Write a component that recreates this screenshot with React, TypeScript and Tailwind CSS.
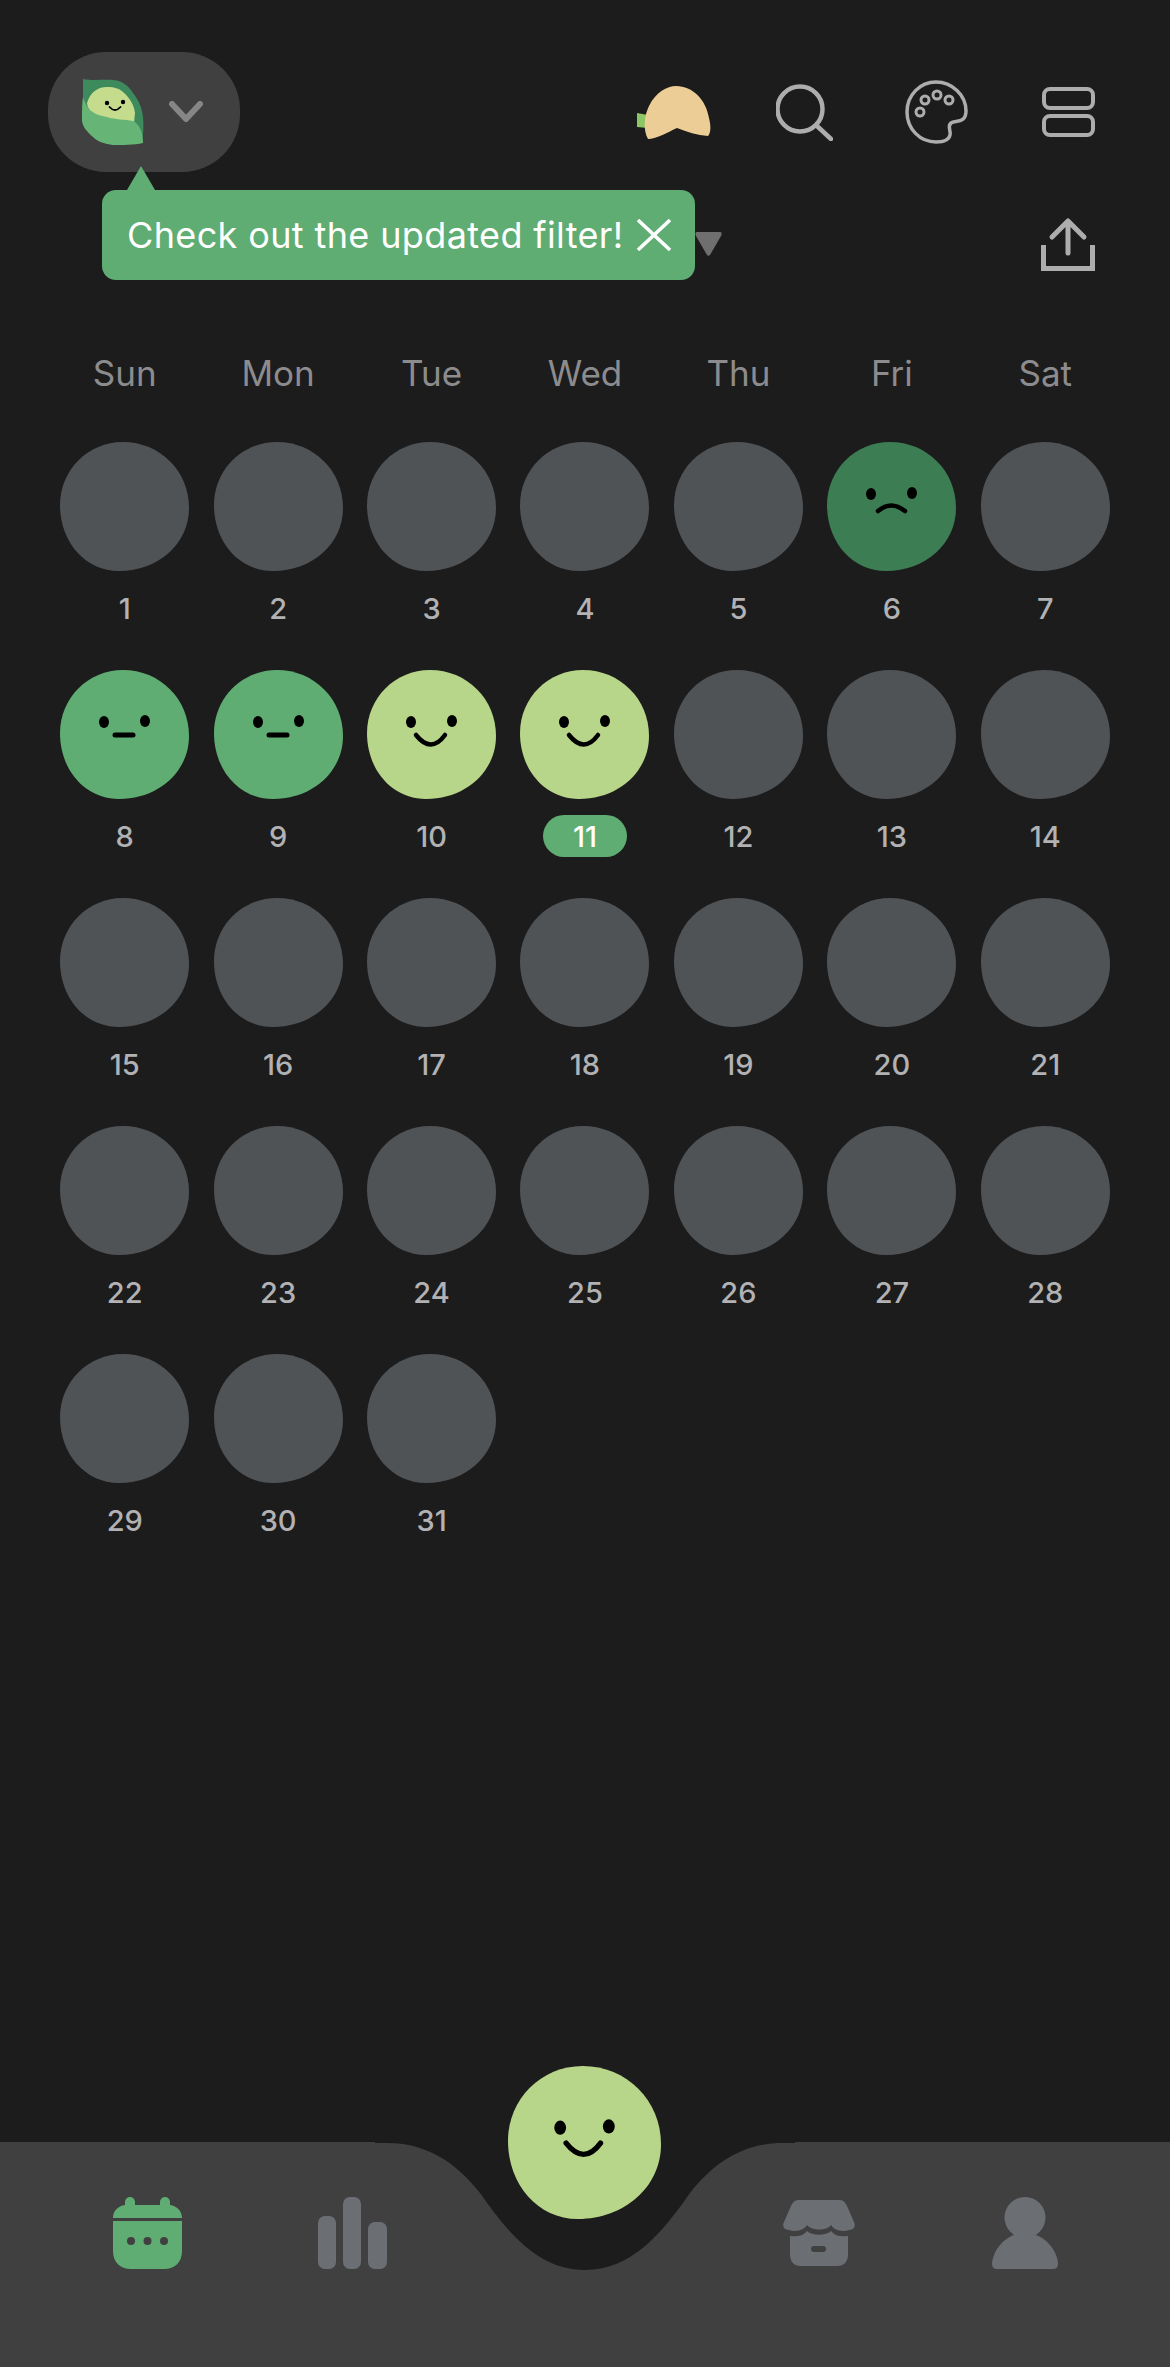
const weekdays = ["Sun", "Mon", "Tue", "Wed", "Thu", "Fri", "Sat"]

type Mood = "none" | "sad" | "neutral" | "happy"

const moods: Record<number, Mood> = { 6: "sad", 8: "neutral", 9: "neutral", 10: "happy", 11: "happy" }

const blobColors = {
  none: "fill-[#505356]",
  sad: "fill-[#3d7d54]",
  neutral: "fill-[#5fad73]",
  happy: "fill-[#b8d68a]",
}

function MoodBlob({ mood, className }: { mood: Mood; className: string }) {
  return (
    <svg viewBox="0 0 129 129" className={className}>
      <path
        className={blobColors[mood]}
        d="M63 0C100 0 129 29 129 66C129 102 98 129 59 129C25 129 0 100 0 63C0 28 28 0 63 0Z"
      />
      {mood !== "none" && (
        <g>
          <ellipse cx="44" cy="52" rx="5" ry="6" fill="#000" />
          <ellipse cx="85" cy="51" rx="5" ry="6" fill="#000" />
        </g>
      )}
      {mood === "sad" && (
        <path d="M51 69Q64 58 78 69" fill="none" stroke="#000" strokeWidth="4.5" strokeLinecap="round" />
      )}
      {mood === "neutral" && (
        <path d="M55 65H73" fill="none" stroke="#000" strokeWidth="5" strokeLinecap="round" />
      )}
      {mood === "happy" && (
        <path d="M49 65Q64 84 78 65" fill="none" stroke="#000" strokeWidth="4.5" strokeLinecap="round" />
      )}
    </svg>
  )
}

function DayCell({ day }: { day: number }) {
  const isToday = day === 11
  return (
    <div className="flex flex-col items-center">
      <MoodBlob mood={moods[day] ?? "none"} className="h-[129px] w-[129px]" />
      <div
        className={`mt-4 flex h-[42px] w-[84px] items-center justify-center rounded-full pt-[2px] text-[29px] font-medium ${
          isToday ? "bg-[#5fad73] text-white" : "text-[#b2b2b4]"
        }`}
      >
        {day}
      </div>
    </div>
  )
}

function PeaLogo() {
  return (
    <svg viewBox="0 0 62 66" className="h-[66px] w-[62px]">
      <path d="M1 0C12 2 22 0 31 1C42 2 47 8 51 14C58 23 60 30 61 38C62 47 61 56 60 64L30 50L1 30Z" fill="#3d8a5c" />
      <path d="M5 24C8 14 15 8 25 8C33 8 38 10 41 13C48 19 52 26 53 34L52 44L20 42C12 38 6 32 5 24Z" fill="#c5dc8c" />
      <path
        d="M1 18C3 25 6 28 8 31C13 35 18 37 25 38C33 41 43 40 51 42C57 45 61 52 61 64C52 66 40 66 31 66C23 65 16 63 11 58C4 52 -1 46 0 38C0 31 0 24 1 18Z"
        fill="#66b577"
      />
      <circle cx="25" cy="24" r="2.2" fill="#000" />
      <circle cx="41" cy="23" r="2.2" fill="#000" />
      <path d="M27.5 28Q33 34 38.5 28" fill="none" stroke="#000" strokeWidth="1.8" strokeLinecap="round" />
    </svg>
  )
}

function FortuneCookie() {
  return (
    <svg viewBox="0 0 74 53" className="h-[53px] w-[74px]">
      <path d="M0 27L11 29V42L0 41Z" fill="#8cc665" />
      <path
        d="M11 53C6 44 7 30 12 20C19 6 30 0 39 0C56 0 69 14 72 32C74 40 74 47 71 50C60 49 50 46 40 42C31 46 20 53 11 53Z"
        fill="#eccd95"
      />
    </svg>
  )
}

function SearchIcon() {
  return (
    <svg viewBox="0 0 57 57" className="h-[57px] w-[57px]" fill="none" stroke="#adadad" strokeWidth="4.5" strokeLinecap="round">
      <circle cx="24" cy="25" r="22.5" />
      <path d="M41 42L55 55" />
    </svg>
  )
}

function PaletteIcon() {
  return (
    <svg viewBox="0 0 63 64" className="h-16 w-[63px]" fill="none" stroke="#adadad" strokeWidth="3.5">
      <path d="M31 2C15 2 2 15 2 32C2 49 15 62 31 62C38 62 44 60 45 55C46 50 42 46 46 43C50 40 61 44 61 31C61 15 47 2 31 2Z" />
      <circle cx="20" cy="20" r="4" strokeWidth="3" />
      <circle cx="32" cy="15" r="4" strokeWidth="3" />
      <circle cx="44" cy="20" r="4" strokeWidth="3" />
      <circle cx="15" cy="32" r="4" strokeWidth="3" />
    </svg>
  )
}

function LayoutIcon() {
  return (
    <svg viewBox="0 0 53 50" className="h-[50px] w-[53px]" fill="none" stroke="#adadad" strokeWidth="4">
      <rect x="2" y="2" width="49" height="19" rx="6" />
      <rect x="2" y="29" width="49" height="19" rx="6" />
    </svg>
  )
}

function ShareIcon() {
  return (
    <svg viewBox="0 0 54 54" className="h-[54px] w-[54px]" fill="none" stroke="#adadad" strokeWidth="5">
      <path d="M2.5 28V51.5H51.5V28" strokeLinecap="butt" />
      <path d="M27 36V4M11 20L27 4L43 20" strokeLinecap="round" strokeLinejoin="round" />
    </svg>
  )
}

function CalendarIcon() {
  return (
    <svg viewBox="0 0 69 72" className="h-[72px] w-[69px]">
      <path
        d="M12 8V5A5 5 0 0 1 22 5V8H47V5A5 5 0 0 1 57 5V8C64 9 69 14 69 21H0C0 14 5 9 12 8Z"
        fill="#5fad73"
      />
      <path d="M0 24H69V54C69 65 62 72 51 72H18C7 72 0 65 0 54Z" fill="#5fad73" />
      <circle cx="18" cy="44" r="4" fill="#404040" />
      <circle cx="34.5" cy="44" r="4" fill="#404040" />
      <circle cx="51" cy="44" r="4" fill="#404040" />
    </svg>
  )
}

function BarsIcon() {
  return (
    <svg viewBox="0 0 69 72" className="h-[72px] w-[69px]" fill="#6b6f74">
      <rect x="0" y="19" width="18" height="53" rx="7" />
      <rect x="25" y="0" width="18" height="72" rx="7" />
      <rect x="50" y="25" width="19" height="47" rx="7" />
    </svg>
  )
}

function StoreIcon() {
  return (
    <svg viewBox="0 0 72 66" className="h-[66px] w-[72px]">
      <path
        d="M16 0H56C60 0 62 2 64 6L71 22C73 26 71 30 66 30C60 32 52 31 48 25C44 31 29 31 24 25C20 31 12 32 6 30C1 30 -1 26 1 22L8 6C10 2 12 0 16 0Z"
        fill="#6b6f74"
      />
      <path
        d="M7 36C14 37 20 36 24 31C29 36 43 36 48 31C52 36 58 37 65 36V54C65 62 61 66 54 66H18C11 66 7 62 7 54Z"
        fill="#6b6f74"
      />
      <rect x="28" y="46" width="15" height="6" rx="3" fill="#404040" />
    </svg>
  )
}

function PersonIcon() {
  return (
    <svg viewBox="0 0 66 72" className="h-[72px] w-[66px]" fill="#6b6f74">
      <circle cx="33" cy="20.5" r="20.5" />
      <path d="M5 72C1 72 0 69 0 66C2 50 16 36 33 36C50 36 64 50 66 66C66 69 65 72 61 72Z" />
    </svg>
  )
}

export default function App() {
  return (
    <div className="relative flex min-h-[2367px] flex-col bg-[#1c1c1c] font-['Inter',sans-serif]">
      <div className="flex items-center pl-12 pr-[75px] pt-[52px]">
        <div className="flex h-[120px] w-48 items-center rounded-[58px] bg-[#404040] pl-[34px]">
          <PeaLogo />
          <svg viewBox="0 0 34 22" className="ml-[25px] h-[22px] w-[34px]" fill="none" stroke="#868686" strokeWidth="6" strokeLinecap="round" strokeLinejoin="round">
            <path d="M3 3L17 18L31 3" />
          </svg>
        </div>
        <div className="ml-auto flex items-center">
          <FortuneCookie />
          <div className="ml-[65px]">
            <SearchIcon />
          </div>
          <div className="ml-[72px]">
            <PaletteIcon />
          </div>
          <div className="ml-[74px]">
            <LayoutIcon />
          </div>
        </div>
      </div>

      <div className="mt-[45px] flex items-center pl-[695px] pr-[75px]">
        <svg viewBox="0 0 27 24" className="h-6 w-[27px]">
          <path d="M2 0H25C27 0 27 2 26 4L15 23C14 24 13 24 12 23L1 4C0 2 0 0 2 0Z" fill="#6f6f6f" />
        </svg>
        <div className="ml-auto">
          <ShareIcon />
        </div>
      </div>

      <div className="absolute left-[102px] top-[190px] flex h-[90px] w-[593px] items-center rounded-[14px] bg-[#5fad73] pl-[25px]">
        <svg viewBox="0 0 28 24" className="absolute left-[25px] top-[-24px] h-6 w-7">
          <path d="M14 0L28 24H0Z" fill="#5fad73" />
        </svg>
        <span className="text-[36px] font-normal leading-none tracking-[0.37px] text-white">Check out the updated filter!</span>
        <svg viewBox="0 0 34 32" className="ml-[14px] h-8 w-[34px]" fill="none" stroke="#fff" strokeWidth="3.5">
          <path d="M1 1L33 31M33 1L1 31" />
        </svg>
      </div>

      <div className="mt-[82px] grid grid-cols-7 px-12">
        {weekdays.map((day) => (
          <div key={day} className="text-center text-[35px] leading-10 text-[#8c8c8e]">
            {day}
          </div>
        ))}
      </div>

      <div className="mt-[49px] grid grid-cols-7 gap-y-[41px] px-12">
        {Array.from({ length: 31 }, (_, i) => (
          <DayCell key={i} day={i + 1} />
        ))}
      </div>

      <nav className="relative mt-auto flex h-[225px] justify-between bg-[#404040] pl-[113px] pr-[112px] pt-[55px]">
        <svg viewBox="0 0 420 130" className="absolute left-[375px] top-[-1px] h-[130px] w-[420px]">
          <path
            d="M0 0V2H12C50 2 80 20 105 52C135 95 165 129 210 129C255 129 285 95 315 52C340 20 370 2 408 2H420V0Z"
            fill="#1c1c1c"
          />
        </svg>
        <div className="relative flex gap-[136px]">
          <CalendarIcon />
          <BarsIcon />
        </div>
        <div className="relative flex gap-[137px]">
          <div className="pt-[3px]">
            <StoreIcon />
          </div>
          <PersonIcon />
        </div>
        <div className="absolute left-[508px] top-[-77px]">
          <MoodBlob mood="happy" className="h-[155px] w-[153px]" />
        </div>
      </nav>
    </div>
  )
}
